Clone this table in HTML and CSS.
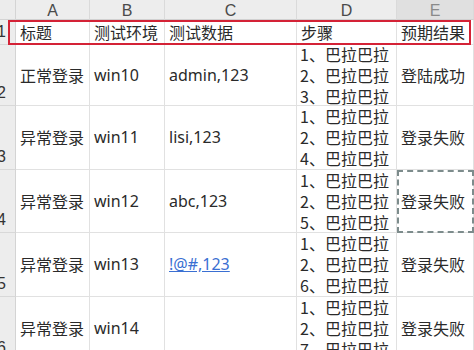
FILE: index.html
```html
<!DOCTYPE html>
<html lang="zh-CN">
<head>
<meta charset="utf-8">
<title>测试用例</title>
<link rel="stylesheet" href="styles.css">
</head>
<body>
<div class="sheet">
  <div class="grid">
    <div class="corner"></div>
    <div class="colhead">A</div>
    <div class="colhead">B</div>
    <div class="colhead">C</div>
    <div class="colhead">D</div>
    <div class="colhead colhead-sel">E</div>

    <div class="rowhead rowhead-mid"><span>1</span></div>
    <div class="cell">标题</div>
    <div class="cell">测试环境</div>
    <div class="cell">测试数据</div>
    <div class="cell">步骤</div>
    <div class="cell">预期结果</div>

    <div class="rowhead"><span>2</span></div>
    <div class="cell">正常登录</div>
    <div class="cell latin">win10</div>
    <div class="cell latin">admin,123</div>
    <div class="cell steps"><div>1、巴拉巴拉</div><div>2、巴拉巴拉</div><div>3、巴拉巴拉</div></div>
    <div class="cell">登陆成功</div>

    <div class="rowhead"><span>3</span></div>
    <div class="cell">异常登录</div>
    <div class="cell latin">win11</div>
    <div class="cell latin">lisi,123</div>
    <div class="cell steps"><div>1、巴拉巴拉</div><div>2、巴拉巴拉</div><div>4、巴拉巴拉</div></div>
    <div class="cell">登录失败</div>

    <div class="rowhead"><span>4</span></div>
    <div class="cell">异常登录</div>
    <div class="cell latin">win12</div>
    <div class="cell latin">abc,123</div>
    <div class="cell steps"><div>1、巴拉巴拉</div><div>2、巴拉巴拉</div><div>5、巴拉巴拉</div></div>
    <div class="cell marquee">登录失败</div>

    <div class="rowhead"><span>5</span></div>
    <div class="cell">异常登录</div>
    <div class="cell latin">win13</div>
    <div class="cell latin"><a class="link" href="#">!@#,123</a></div>
    <div class="cell steps"><div>1、巴拉巴拉</div><div>2、巴拉巴拉</div><div>6、巴拉巴拉</div></div>
    <div class="cell">登录失败</div>

    <div class="rowhead"><span>6</span></div>
    <div class="cell">异常登录</div>
    <div class="cell latin">win14</div>
    <div class="cell latin"></div>
    <div class="cell steps"><div>1、巴拉巴拉</div><div>2、巴拉巴拉</div><div>7、巴拉巴拉</div></div>
    <div class="cell">登录失败</div>
  </div>
  <div class="highlight"></div>
</div>
</body>
</html>
```

FILE: styles.css
```css
* { box-sizing: border-box; }

html, body {
  margin: 0;
  padding: 0;
  background: #ffffff;
}

body {
  width: 474px;
  height: 350px;
  overflow: hidden;
  font-family: "Noto Sans CJK SC", "Noto Sans", sans-serif;
  color: #2a2a2a;
}

.sheet {
  position: relative;
  width: 474px;
  height: 350px;
  overflow: hidden;
}

.grid {
  display: grid;
  grid-template-columns: 16px 74px 75px 132px 100px 77px;
  grid-template-rows: 20px 25px 61px 64px 63px 64px 64px;
}

.corner {
  background: #ececec;
  border-right: 1px solid #d4d4d4;
  border-bottom: 1px solid #d4d4d4;
}

.colhead {
  background: #ededed;
  border-right: 1px solid #dadada;
  border-bottom: 1px solid #d0d0d0;
  display: flex;
  align-items: center;
  justify-content: center;
  font-family: "Liberation Sans", Arial, sans-serif;
  font-size: 16px;
  color: #4a4a4a;
  padding-top: 2px;
}

.colhead-sel {
  background: #e0e0e0;
  color: #8a8a8a;
}

.rowhead {
  background: #ededed;
  border-right: 1px solid #d4d4d4;
  border-bottom: 1px solid #d8d8d8;
  display: flex;
  justify-content: flex-end;
  align-items: flex-end;
  overflow: hidden;
  font-family: "Liberation Sans", Arial, sans-serif;
  font-size: 16px;
  color: #333;
  padding-right: 9px;
  padding-bottom: 3px;
}

.rowhead-mid {
  align-items: center;
  padding-bottom: 0;
}

.cell {
  border-right: 1px solid #e1e1e1;
  border-bottom: 1px solid #e1e1e1;
  display: flex;
  flex-direction: column;
  justify-content: center;
  padding-left: 4px;
  font-size: 16px;
  line-height: 21px;
  white-space: nowrap;
  overflow: visible;
}

.latin {
  font-family: "Noto Sans", "Noto Sans CJK SC", sans-serif;
  font-size: 16px;
  color: #2a2a2a;
}

.steps {
  padding-left: 3px;
  line-height: 21px;
}

.link {
  color: #3a6fd2;
  text-decoration: underline;
}

.marquee {
  outline: 2px dashed #7d8c8c;
  outline-offset: -2px;
}

.highlight {
  position: absolute;
  left: 8px;
  top: 20px;
  width: 463px;
  height: 25px;
  border: 2px solid #d42236;
  pointer-events: none;
}
```
